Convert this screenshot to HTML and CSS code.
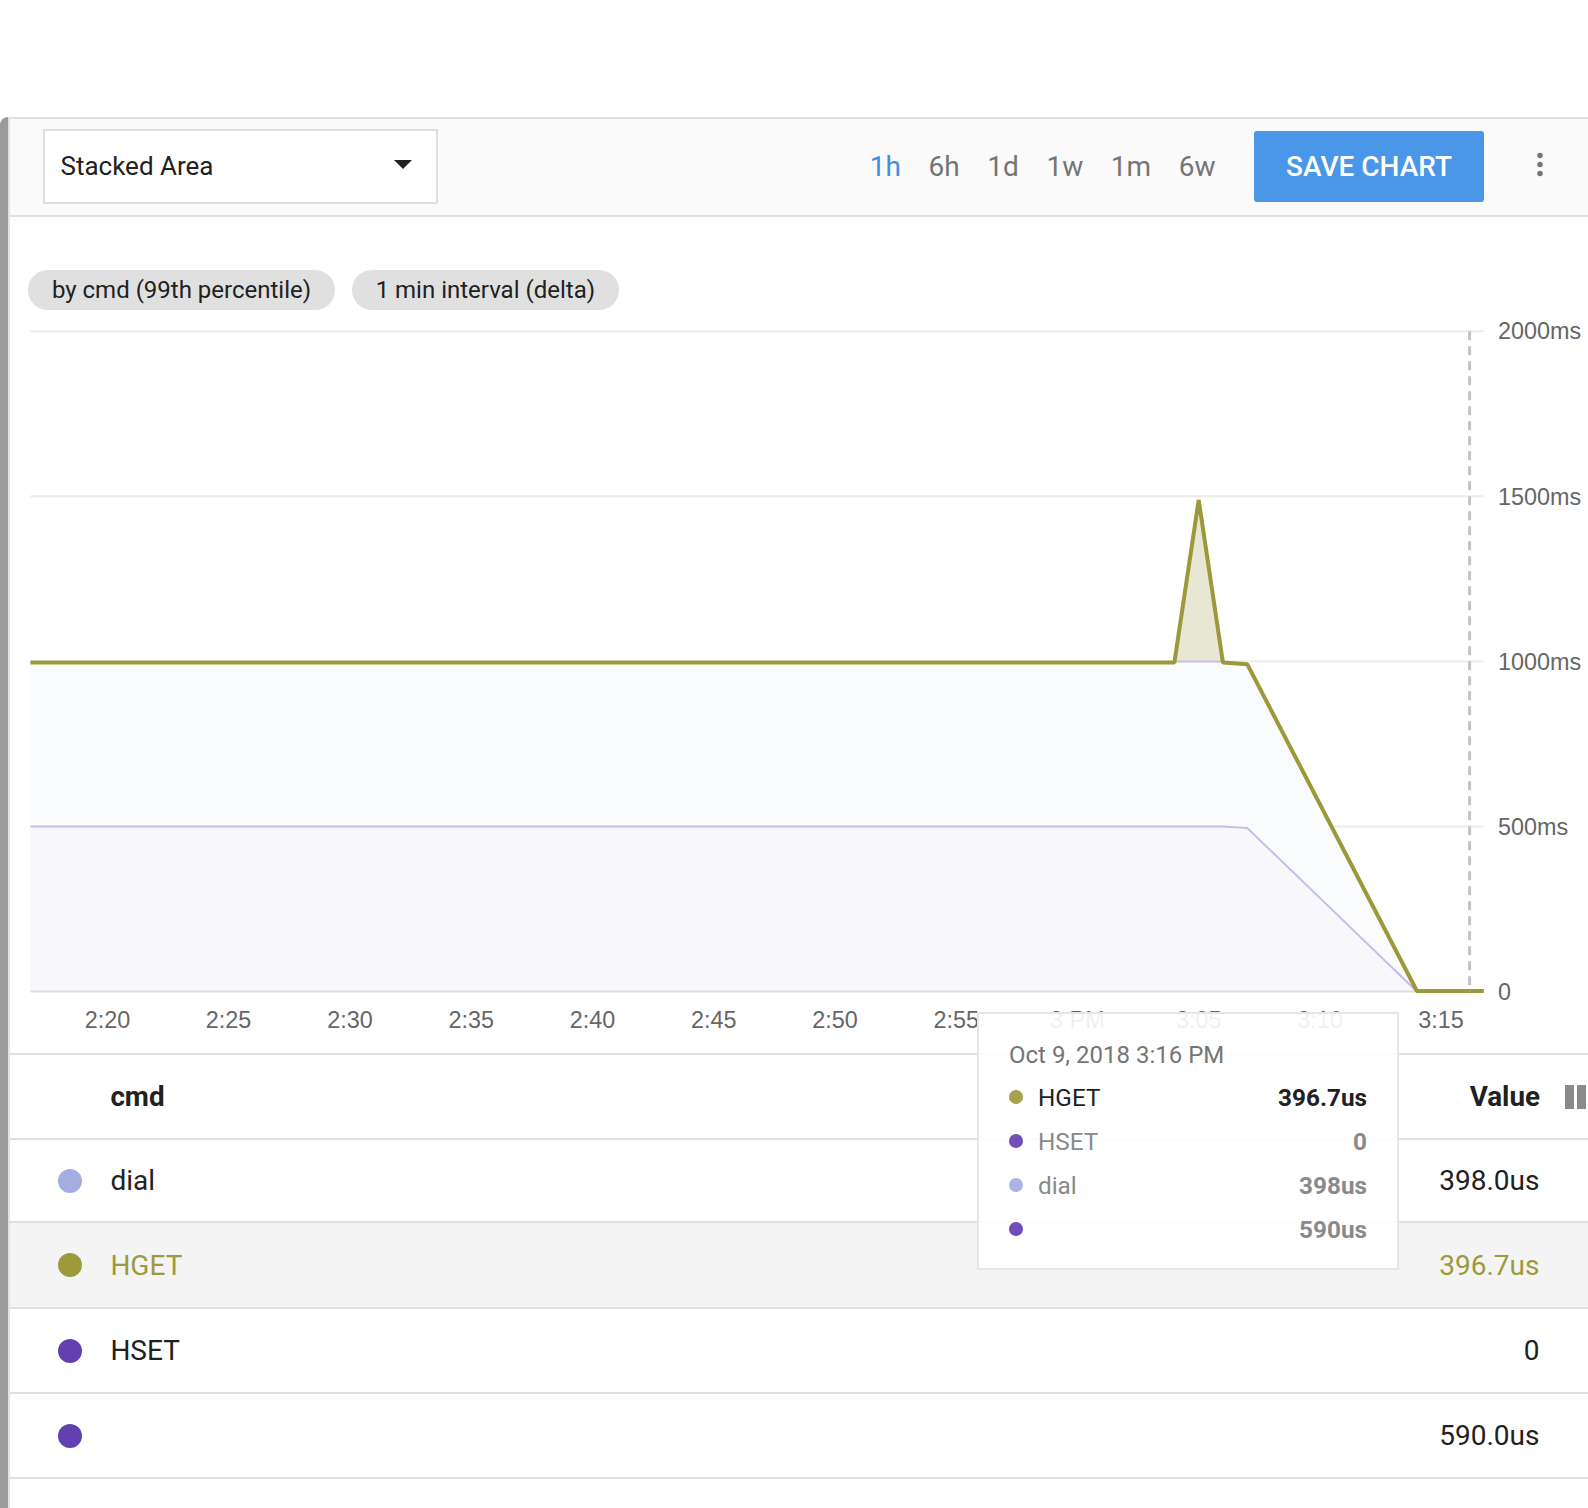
FILE: index.html
```html
<!DOCTYPE html>
<html>
<head>
<meta charset="utf-8">
<title>Chart</title>
<link rel="stylesheet" href="styles.css">
</head>
<body>
<div class="page">
  <div class="frame">
    <div class="panel">
      <div class="toolbar">
        <div class="select">
          <span class="select-label">Stacked Area</span>
          <svg class="caret" width="18" height="9" viewBox="0 0 18 9"><path d="M0 0H18L9 9Z"/></svg>
        </div>
        <div class="ranges">
          <span class="range active">1h</span>
          <span class="range">6h</span>
          <span class="range">1d</span>
          <span class="range">1w</span>
          <span class="range">1m</span>
          <span class="range">6w</span>
        </div>
        <button class="save">SAVE CHART</button>
        <div class="kebab">
          <svg width="48" height="48" viewBox="0 0 48 48"><circle cx="24" cy="12.5" r="2.75"/><circle cx="24" cy="21.5" r="2.75"/><circle cx="24" cy="30.5" r="2.75"/></svg>
        </div>
      </div>

      <div class="chips">
        <span class="chip">by cmd (99th percentile)</span>
        <span class="chip">1 min interval (delta)</span>
      </div>

      <svg class="chart" width="1578" height="743" viewBox="10 310 1578 743">
        <g class="grid">
          <line x1="30.4" y1="331.2" x2="1483.8" y2="331.2"/>
          <line x1="30.4" y1="496.3" x2="1483.8" y2="496.3"/>
          <line x1="30.4" y1="661.4" x2="1483.8" y2="661.4"/>
          <line x1="30.4" y1="826.4" x2="1483.8" y2="826.4"/>
        </g>
        <path class="fill-dial" d="M30.4 826.4 L1222.9 826.4 L1247.2 828 L1416.9 991.5 L1483.8 991.5 L30.4 991.5 Z"/>
        <path class="fill-mid" d="M30.4 661.4 L1222.9 661.4 L1247.2 663.7 L1416.9 991.5 L1247.2 828 L1222.9 826.4 L30.4 826.4 Z"/>
        <path class="fill-spike" d="M1174.4 661.4 L1198.7 496.3 L1222.9 661.4 Z"/>
        <line class="axis-line" x1="30.4" y1="991.5" x2="1483.8" y2="991.5"/>
        <path class="line-dial" d="M30.4 826.4 L1222.9 826.4 L1247.2 828 L1416.9 991.5"/>
        <path class="line-dial" d="M1174.4 661.4 L1222.9 661.4"/>
        <path class="line-hget" d="M30.4 662.4 L1174.4 662.4 L1198.7 500 L1222.9 662.4 L1247.2 664.2 L1416.9 991 L1483.8 991"/>
        <line class="cursor" x1="1469.6" y1="331.2" x2="1469.6" y2="991.5"/>
        <g class="axis">
          <text x="1498" y="339.4">2000ms</text>
          <text x="1498" y="504.5">1500ms</text>
          <text x="1498" y="669.6">1000ms</text>
          <text x="1498" y="834.6">500ms</text>
          <text x="1498" y="999.7">0</text>
        </g>
        <g class="axis xaxis">
          <text x="107.4" y="1028">2:20</text>
          <text x="228.6" y="1028">2:25</text>
          <text x="349.9" y="1028">2:30</text>
          <text x="471.2" y="1028">2:35</text>
          <text x="592.4" y="1028">2:40</text>
          <text x="713.7" y="1028">2:45</text>
          <text x="834.9" y="1028">2:50</text>
          <text x="956.2" y="1028">2:55</text>
          <text x="1077.4" y="1028">3 PM</text>
          <text x="1198.7" y="1028">3:05</text>
          <text x="1319.9" y="1028">3:10</text>
          <text x="1441.1" y="1028">3:15</text>
        </g>
      </svg>

      <div class="table">
        <div class="row head">
          <span class="name">cmd</span>
          <span class="val">Value</span>
          <span class="cols-icon"><i></i><i></i></span>
        </div>
        <div class="row short">
          <span class="dot c-dial"></span>
          <span class="name">dial</span>
          <span class="val">398.0us</span>
        </div>
        <div class="row hl">
          <span class="dot c-hget"></span>
          <span class="name">HGET</span>
          <span class="val">396.7us</span>
        </div>
        <div class="row">
          <span class="dot c-hset"></span>
          <span class="name">HSET</span>
          <span class="val">0</span>
        </div>
        <div class="row">
          <span class="dot c-hset"></span>
          <span class="name"></span>
          <span class="val">590.0us</span>
        </div>
      </div>
    </div>
  </div>

  <div class="tooltip">
    <div class="tt-date">Oct 9, 2018 3:16 PM</div>
    <div class="tt-row strong">
      <span class="tt-dot c-hget-tt"></span>
      <span class="tt-name">HGET</span>
      <span class="tt-val">396.7us</span>
    </div>
    <div class="tt-row">
      <span class="tt-dot c-hset-tt"></span>
      <span class="tt-name">HSET</span>
      <span class="tt-val">0</span>
    </div>
    <div class="tt-row">
      <span class="tt-dot c-dial-tt"></span>
      <span class="tt-name">dial</span>
      <span class="tt-val">398us</span>
    </div>
    <div class="tt-row">
      <span class="tt-dot c-hset-tt"></span>
      <span class="tt-name"></span>
      <span class="tt-val">590us</span>
    </div>
  </div>
</div>
</body>
</html>
```

FILE: styles.css
```css
* { box-sizing: border-box; }

html, body {
  margin: 0;
  padding: 0;
  background: #ffffff;
  overflow: hidden;
}

body {
  font-family: Roboto, "Noto Sans", "Liberation Sans", sans-serif;
  color: #212121;
}

.page {
  position: relative;
  width: 1588px;
  height: 1508px;
  padding-top: 117px;
}

.frame {
  height: 1391px;
  border-left: 8px solid #9b9b9b;
  border-top-left-radius: 8px;
}

.panel {
  height: 100%;
  width: 1580px;
  border-left: 2px solid #e2e2e2;
}

/* Toolbar */
.toolbar {
  display: flex;
  align-items: center;
  background: #fafafa;
  border-top: 2px solid #e0e0e0;
  border-bottom: 2px solid #e0e0e0;
  padding: 10px 24.5px 10.5px 32.5px;
}

.select {
  display: flex;
  align-items: center;
  justify-content: space-between;
  width: 395px;
  height: 75px;
  background: #ffffff;
  border: 2px solid #dedede;
  padding: 0 24px 0 16px;
}

.select-label {
  font-size: 26px;
  color: #212121;
  margin-top: -2px;
}

.caret { display: block; fill: #212121; margin-top: -4px; }

.ranges {
  margin-left: auto;
  display: flex;
  gap: 27.6px;
}

.range {
  font-size: 28px;
  color: #757575;
}

.range.active { color: #3f8fe2; }

.save {
  margin-left: 38.5px;
  width: 230px;
  height: 71px;
  border: none;
  border-radius: 3px;
  background: #4a96e8;
  color: #ffffff;
  font-family: Roboto, "Liberation Sans", sans-serif;
  font-size: 28px;
  font-weight: 500;
  padding: 0;
}

.kebab {
  margin-left: 31.5px;
  width: 48px;
  height: 48px;
}

.kebab svg { display: block; fill: #757575; }

/* Chips */
.chips {
  display: flex;
  gap: 17px;
  margin-top: 53.5px;
  padding-left: 18.4px;
}

.chip {
  height: 40px;
  line-height: 40px;
  padding: 0 24px 0 23.5px;
  border-radius: 20px;
  background: #e0e0e0;
  font-size: 24px;
  color: #212121;
}

/* Chart */
.chart { display: block; }

.grid line { stroke: #ececec; stroke-width: 2; }
.axis-line { stroke: #dedede; stroke-width: 2; }
.fill-dial { fill: #f7f7fc; }
.fill-mid { fill: #fafbfd; }
.fill-spike { fill: #e7e7d4; }
.line-dial { fill: none; stroke: #c6bfe6; stroke-width: 2; }
.line-hget { fill: none; stroke: #9c993a; stroke-width: 4; stroke-linejoin: bevel; }
.cursor { stroke: #c4c4c4; stroke-width: 3; stroke-dasharray: 9 6; }

.axis text {
  font-family: "Liberation Sans", Arial, sans-serif;
  font-size: 23.4px;
  fill: #666666;
}

.xaxis text { text-anchor: middle; }

/* Table */
.table { border-top: 2px solid #e0e0e0; }

.row {
  display: flex;
  align-items: center;
  height: 85px;
  border-bottom: 2px solid #e0e0e0;
  padding: 0 48.5px 0 48px;
  font-size: 28px;
  color: #212121;
}

.row.short { height: 83px; }

.row.head {
  padding: 0 2px 0 100.4px;
  font-weight: 700;
  font-size: 27.8px;
}

.row.hl { background: #f4f4f4; color: #9e9a3c; height: 86px; }

.dot {
  width: 24px;
  height: 24px;
  border-radius: 50%;
  margin-right: 28.4px;
  flex: none;
}

.name { flex: 1; }
.val { text-align: right; }

.cols-icon {
  display: flex;
  gap: 3px;
  margin-left: 25px;
  height: 24px;
}

.cols-icon i {
  display: block;
  width: 9px;
  height: 24px;
  background: #8a8a8a;
}

.c-dial { background: #a3ade0; }
.c-hget { background: #9e9a3c; }
.c-hset { background: #6340b0; }

/* Tooltip */
.tooltip {
  position: absolute;
  left: 977px;
  top: 1012px;
  width: 422px;
  height: 258px;
  background: rgba(255, 255, 255, 0.9);
  border: 2px solid #e6e6e6;
  padding: 21px 30px 0 30px;
  font-size: 24.3px;
}

.tt-date {
  height: 40px;
  line-height: 40px;
  font-size: 24px;
  color: #757575;
}

.tt-row {
  display: flex;
  align-items: center;
  height: 44px;
  color: #8a8a8a;
}

.tt-row.strong { color: #212121; }

.tt-dot {
  width: 14px;
  height: 14px;
  border-radius: 50%;
  margin-right: 15px;
  flex: none;
}

.tt-name { flex: 1; }
.tt-val { font-weight: 700; }

.c-hget-tt { background: #a7a24c; }
.c-hset-tt { background: #7050b8; }
.c-dial-tt { background: #aab3e3; }
```
